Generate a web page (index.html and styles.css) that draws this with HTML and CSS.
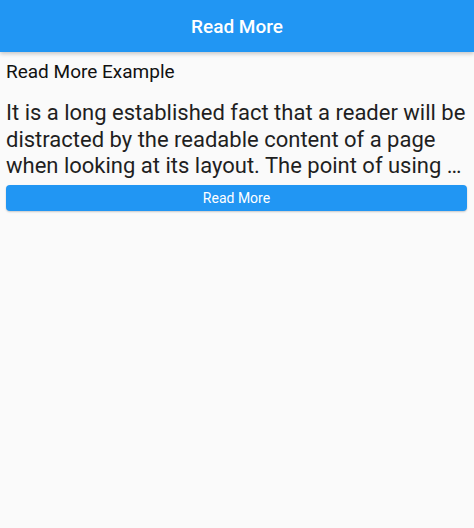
FILE: index.html
```html
<!DOCTYPE html>
<html lang="en">
<head>
<meta charset="utf-8">
<title>Read More</title>
<link rel="stylesheet" href="styles.css">
</head>
<body>
<header class="app-bar">
  <h1 class="app-bar__title">Read More</h1>
</header>
<main class="content">
  <h2 class="example-title">Read More Example</h2>
  <p class="excerpt">It is a long established fact that a reader will be distracted by the readable content of a page when looking at its layout. The point of using …</p>
  <button class="read-more-btn" type="button">Read More</button>
</main>
</body>
</html>
```

FILE: styles.css
```css
* {
  box-sizing: border-box;
}

html, body {
  margin: 0;
  padding: 0;
  height: 100%;
}

body {
  background: #fafafa;
  font-family: Roboto, "Noto Sans", sans-serif;
  color: #1f1f1f;
}

.app-bar {
  height: 52px;
  background: #2196f3;
  display: flex;
  align-items: center;
  justify-content: center;
  box-shadow: 0 2px 4px rgba(0, 0, 0, 0.2);
}

.app-bar__title {
  margin: 1px 0 0;
  font-size: 19px;
  font-weight: 500;
  color: #ffffff;
}

.content {
  padding: 8px 7px 0 6px;
  display: flex;
  flex-direction: column;
}

.example-title {
  margin: 0;
  font-size: 19px;
  font-weight: 400;
  line-height: 24px;
  color: #111111;
}

.excerpt {
  margin: 16px 0 0;
  font-size: 22px;
  line-height: 26.5px;
}

.read-more-btn {
  margin-top: 5px;
  height: 26px;
  line-height: 26px;
  border: none;
  border-radius: 4px;
  background: #2196f3;
  color: #ffffff;
  font-family: Roboto, "Noto Sans", sans-serif;
  font-size: 14px;
  font-weight: 400;
  padding: 0;
  box-shadow: 0 1px 2px rgba(0, 0, 0, 0.2);
}
```
